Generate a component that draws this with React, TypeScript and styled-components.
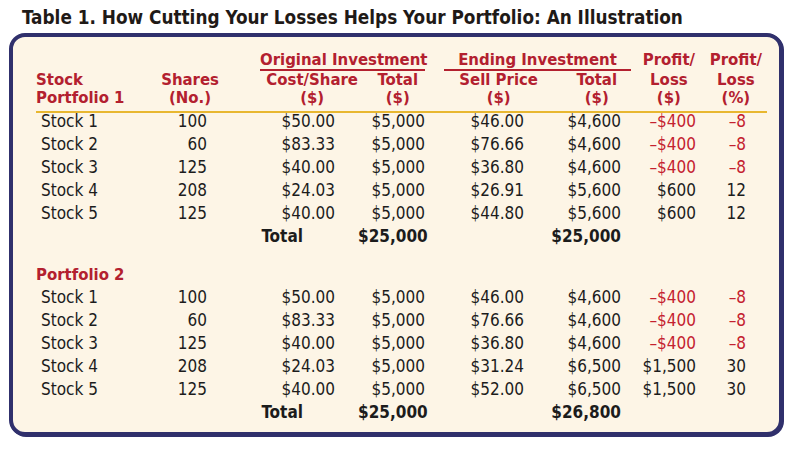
import styled, { createGlobalStyle } from 'styled-components'

const FONT = '"DejaVu Sans Condensed", "DejaVu Sans", sans-serif'
const RED = '#b3202f'
const NAVY = '#30306c'

const GlobalStyle = createGlobalStyle`
  html, body {
    margin: 0;
    padding: 0;
    background: #ffffff;
  }
  body {
    font-family: ${FONT};
    color: #1c1c1c;
  }
`

const COLS = '114px 69px 139px 67px 113px 83px 75px 71px'

const Page = styled.div`
  width: 792px;
  height: 451px;
  overflow: hidden;
`

const Title = styled.h1`
  margin: 0;
  padding: 8px 0 0 22px;
  font-size: 18.8px;
  line-height: 20px;
  font-weight: 700;
  color: #1f1a17;
`

const Card = styled.div`
  box-sizing: border-box;
  margin: 5px 0 0 9px;
  width: 774px;
  border: 4px solid ${NAVY};
  border-radius: 16px;
  background: #fdf5e6;
  box-shadow: 1px 1px 0 ${NAVY};
  padding: 14px 0 11px 23px;
`

const Head = styled.div`
  display: grid;
  grid-template-columns: ${COLS};
  grid-template-rows: 20px 18px 18px;
  width: 731px;
  padding-bottom: 4px;
  border-bottom: 2px solid #e8b730;
  color: ${RED};
  font-weight: 700;
  font-size: 16.6px;
  line-height: 18px;
`

const Group = styled.div<{ $col: string; $ml: number; $w: number }>`
  grid-row: 1;
  grid-column: ${(p) => p.$col};
  margin-left: ${(p) => p.$ml}px;
  width: ${(p) => p.$w}px;
  height: 18px;
  border-bottom: 2px solid ${RED};
  text-align: center;
  white-space: nowrap;
`

const Stack = styled.div<{ $col: number; $tall?: boolean; $mr?: number; $left?: boolean }>`
  grid-column: ${(p) => p.$col};
  grid-row: ${(p) => (p.$tall ? '1 / 4' : '2 / 4')};
  display: flex;
  flex-direction: column;
  align-items: ${(p) => (p.$left ? 'flex-start' : 'center')};
  justify-self: ${(p) => (p.$left ? 'start' : 'end')};
  margin-right: ${(p) => p.$mr ?? 0}px;
  white-space: nowrap;
`

const HeadLine = styled.span<{ $top?: boolean }>`
  display: block;
  height: ${(p) => (p.$top ? 20 : 18)}px;
`

const Body = styled.div`
  display: grid;
  grid-template-columns: ${COLS};
  row-gap: 6px;
  width: 731px;
  font-size: 17px;
  line-height: 17px;
`

const Cell = styled.div<{ $pl?: number; $pr?: number; $left?: boolean; $bold?: boolean; $neg?: boolean }>`
  text-align: ${(p) => (p.$left ? 'left' : 'right')};
  padding-left: ${(p) => p.$pl ?? 0}px;
  padding-right: ${(p) => p.$pr ?? 0}px;
  font-weight: ${(p) => (p.$bold ? 700 : 400)};
  color: ${(p) => (p.$neg ? '#c4212f' : '#1c1c1c')};
  white-space: nowrap;
`

const Label = styled.div`
  grid-column: 1 / -1;
  margin-top: 15px;
  color: ${RED};
  font-weight: 700;
  font-size: 16.6px;
`

const PAD = [
  { pl: 5, left: true },
  { pr: 12 },
  { pr: 23 },
  { pr: 0 },
  { pr: 14 },
  { pr: 0 },
  { pr: 0 },
  { pr: 21 },
]

const PORTFOLIO_1 = [
  ['Stock 1', '100', '$50.00', '$5,000', '$46.00', '$4,600', '–$400', '–8'],
  ['Stock 2', '60', '$83.33', '$5,000', '$76.66', '$4,600', '–$400', '–8'],
  ['Stock 3', '125', '$40.00', '$5,000', '$36.80', '$4,600', '–$400', '–8'],
  ['Stock 4', '208', '$24.03', '$5,000', '$26.91', '$5,600', '$600', '12'],
  ['Stock 5', '125', '$40.00', '$5,000', '$44.80', '$5,600', '$600', '12'],
]

const PORTFOLIO_2 = [
  ['Stock 1', '100', '$50.00', '$5,000', '$46.00', '$4,600', '–$400', '–8'],
  ['Stock 2', '60', '$83.33', '$5,000', '$76.66', '$4,600', '–$400', '–8'],
  ['Stock 3', '125', '$40.00', '$5,000', '$36.80', '$4,600', '–$400', '–8'],
  ['Stock 4', '208', '$24.03', '$5,000', '$31.24', '$6,500', '$1,500', '30'],
  ['Stock 5', '125', '$40.00', '$5,000', '$52.00', '$6,500', '$1,500', '30'],
]

function Rows({ rows, total, end }: { rows: string[][]; total: string; end: string }) {
  return (
    <>
      {rows.map((row) =>
        row.map((v, i) => (
          <Cell key={row[0] + i} $pl={PAD[i].pl} $pr={PAD[i].pr} $left={PAD[i].left} $neg={v.startsWith('–')}>
            {v}
          </Cell>
        ))
      )}
      <Cell />
      <Cell />
      <Cell $bold $pr={55}>Total</Cell>
      <Cell $bold>{total}</Cell>
      <Cell />
      <Cell $bold>{end}</Cell>
      <Cell />
      <Cell />
    </>
  )
}

export default function App() {
  return (
    <Page>
      <GlobalStyle />
      <Title>Table 1. How Cutting Your Losses Helps Your Portfolio: An Illustration</Title>
      <Card>
        <Head>
          <Group $col="3 / 5" $ml={41} $w={165}>Original Investment</Group>
          <Group $col="5 / 7" $ml={19} $w={187}>Ending Investment</Group>
          <Stack $col={1} $left>
            <HeadLine>Stock</HeadLine>
            <HeadLine>Portfolio 1</HeadLine>
          </Stack>
          <Stack $col={2}>
            <HeadLine>Shares</HeadLine>
            <HeadLine>(No.)</HeadLine>
          </Stack>
          <Stack $col={3}>
            <HeadLine>Cost/Share</HeadLine>
            <HeadLine>($)</HeadLine>
          </Stack>
          <Stack $col={4} $mr={7}>
            <HeadLine>Total</HeadLine>
            <HeadLine>($)</HeadLine>
          </Stack>
          <Stack $col={5}>
            <HeadLine>Sell Price</HeadLine>
            <HeadLine>($)</HeadLine>
          </Stack>
          <Stack $col={6} $mr={4}>
            <HeadLine>Total</HeadLine>
            <HeadLine>($)</HeadLine>
          </Stack>
          <Stack $col={7} $tall $mr={1}>
            <HeadLine $top>Profit/</HeadLine>
            <HeadLine>Loss</HeadLine>
            <HeadLine>($)</HeadLine>
          </Stack>
          <Stack $col={8} $tall $mr={5}>
            <HeadLine $top>Profit/</HeadLine>
            <HeadLine>Loss</HeadLine>
            <HeadLine>(%)</HeadLine>
          </Stack>
        </Head>
        <Body>
          <Rows rows={PORTFOLIO_1} total="$25,000" end="$25,000" />
          <Label>Portfolio 2</Label>
          <Rows rows={PORTFOLIO_2} total="$25,000" end="$26,800" />
        </Body>
      </Card>
    </Page>
  )
}
